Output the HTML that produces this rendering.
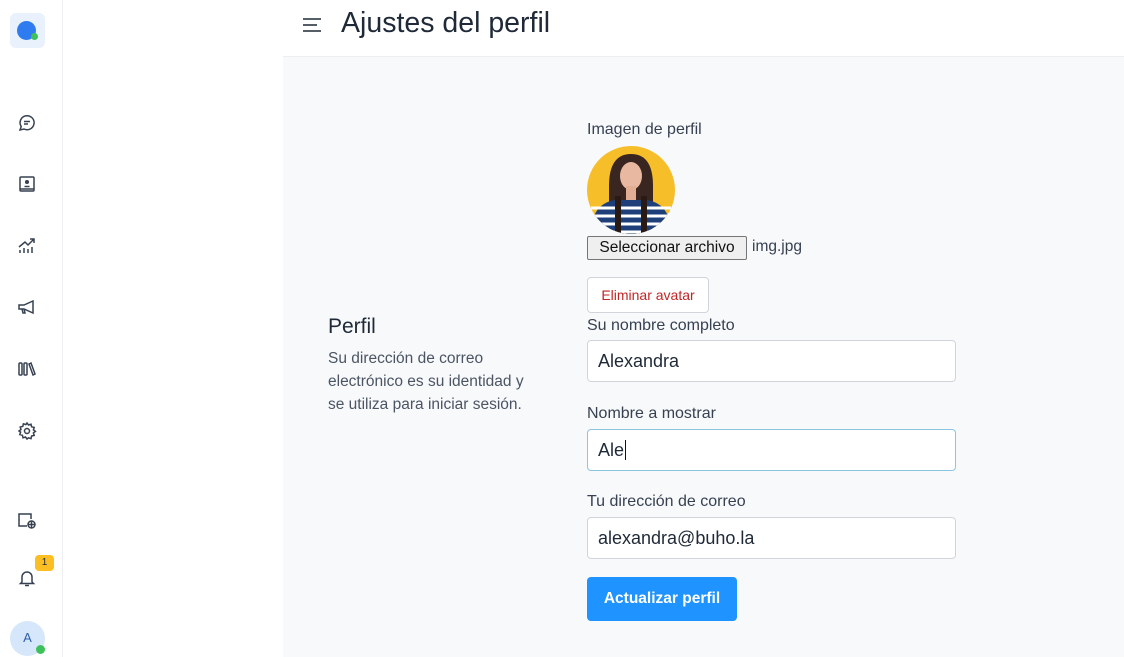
<!DOCTYPE html>
<html><head><meta charset="utf-8"><style>
*{box-sizing:border-box;margin:0;padding:0}
body{width:1124px;height:657px;overflow:hidden;font-family:"Liberation Sans",sans-serif;background:#fff;position:relative;color:#1f2937}
.side{position:absolute;left:0;top:0;width:63px;height:657px;border-right:1px solid #eef0f3;background:#fff}
.panel{position:absolute;left:63px;top:0;width:220px;height:657px;background:#fff}
.head{position:absolute;left:283px;top:0;right:0;height:57px;border-bottom:1px solid #eceef1;background:#fff}
.main{position:absolute;left:283px;top:57px;right:0;bottom:0;background:#f8f9fb}
.ic{position:absolute;left:17px;width:20px;height:20px}
.abs{position:absolute}
.lbl{position:absolute;left:587px;font-size:16px;color:#374151}
.inp{position:absolute;left:587px;width:369px;height:42px;border:1px solid #d1d5db;border-radius:4px;background:#fff;font-size:18px;padding:10px 10px;color:#1f2937}
</style></head><body>
<div class="side">
 <div class="abs" style="left:10px;top:13px;width:35px;height:35px;background:#e9f1fd;border-radius:6px"></div>
 <div class="abs" style="left:17px;top:21px;width:19px;height:19px;background:#2f7cf0;border-radius:50%"></div>
 <div class="abs" style="left:31px;top:33px;width:7px;height:7px;background:#3ec15a;border-radius:50%"></div>
 <svg class="ic" style="top:113px" viewBox="0 0 20 20" fill="none" stroke="#374151" stroke-width="1.5"><path d="M3 17l1.2-3.5A7 7 0 1 1 7 16z"/><path d="M7 8.5h6M7 11h4"/></svg>
 <svg class="ic" style="top:174px" viewBox="0 0 20 20" fill="none" stroke="#374151" stroke-width="1.5"><rect x="3" y="3" width="14" height="14" rx="1"/><path d="M3 15h14"/><circle cx="10" cy="8" r="1.3" fill="#374151"/><path d="M7.5 12.5h5"/></svg>
 <svg class="ic" style="top:236px" viewBox="0 0 20 20" fill="none" stroke="#374151" stroke-width="1.5"><path d="M2 11l6-5 3 3 6-6M13 3h4v4M3 17v-3M7 17v-5M11 17v-4M15 17v-6"/></svg>
 <svg class="ic" style="top:297px" viewBox="0 0 20 20" fill="none" stroke="#374151" stroke-width="1.5"><path d="M2 8h5l9-4v12l-9-4H2zM5 12l1 4h2l-1-4"/></svg>
 <svg class="ic" style="top:359px" viewBox="0 0 20 20" fill="none" stroke="#374151" stroke-width="1.5"><rect x="2" y="4" width="3" height="12" rx="1"/><rect x="7" y="4" width="3" height="12" rx="1"/><path d="M12 5l2-1 4 11-2 1z"/></svg>
 <svg class="ic" style="top:421px" viewBox="0 0 20 20" fill="none" stroke="#374151" stroke-width="1.5"><circle cx="10" cy="10" r="2.5"/><path d="M10 2l1.5 2 2.5-.8.6 2.6 2.6.6-.8 2.5 2 1.5-2 1.5.8 2.5-2.6.6-.6 2.6-2.5-.8L10 18l-1.5-2-2.5.8-.6-2.6-2.6-.6.8-2.5L2 10l2-1.5-.8-2.5 2.6-.6.6-2.6 2.5.8z"/></svg>
 <svg class="ic" style="top:510px" viewBox="0 0 20 20" fill="none" stroke="#374151" stroke-width="1.5"><path d="M10 16H2V4h12v5"/><circle cx="14.5" cy="14.5" r="3.5"/><path d="M11 14.5h7M14.5 11v7"/></svg>
 <svg class="ic" style="top:568px" viewBox="0 0 20 20" fill="none" stroke="#374151" stroke-width="1.5"><path d="M5 14V9a5 5 0 0 1 10 0v5l1.5 1.5h-13zM8 17.5h4"/></svg>
 <div class="abs" style="left:35px;top:555px;width:19px;height:16px;background:#fbbf24;border-radius:4px;font-size:10px;text-align:center;line-height:16px;color:#1f2937">1</div>
 <div class="abs" style="left:10px;top:621px;width:35px;height:35px;background:#d6e6fb;border-radius:50%;font-size:13px;text-align:center;line-height:33px;color:#2f5fa8">A</div>
 <div class="abs" style="left:36px;top:645px;width:9px;height:9px;background:#3ec15a;border-radius:50%"></div>
</div>
<div class="panel"></div>
<div class="head">
 <svg class="abs" style="left:20px;top:17px" width="19" height="16" viewBox="0 0 19 16" stroke="#1f2937" stroke-width="1.6"><path d="M0 2h18M0 8h14M0 14h18"/></svg>
 <div class="abs" style="left:58px;top:7px;font-size:28.5px;color:#1f2937">Ajustes del perfil</div>
</div>
<div class="main"></div>
<div class="abs" style="left:328px;top:315px;font-size:21px;color:#1f2937">Perfil</div>
<div class="abs" style="left:328px;top:347px;font-size:15.5px;line-height:23px;color:#4b5563;width:215px">Su dirección de correo electrónico es su identidad y se utiliza para iniciar sesión.</div>
<div class="lbl" style="top:121px">Imagen de perfil</div>
<svg class="abs" style="left:587px;top:146px" width="88" height="88" viewBox="0 0 88 88">
 <defs><clipPath id="c"><circle cx="44" cy="44" r="44"/></clipPath></defs>
 <g clip-path="url(#c)">
 <rect width="88" height="88" fill="#f6bf2a"/>
 <path d="M22 88V40q0-32 22-32t22 32v48z" fill="#3a2620"/>
 <ellipse cx="44" cy="30" rx="11" ry="14" fill="#e8b9a0"/>
 <rect x="39" y="40" width="10" height="14" fill="#e1ae94"/>
 <path d="M4 88q0-30 24-34h32q24 4 24 34z" fill="#1e3f7a"/>
 <g stroke="#fff" stroke-width="3"><path d="M4 62h80M4 70h80M4 78h80M4 86h80"/></g>
 <path d="M28 88V50h6v38zM54 88V50h6v38z" fill="#2a1a15"/>
 </g></svg>
<div class="abs" style="left:587px;top:236px;width:160px;height:24px;background:#efefef;border:1px solid #767676;border-radius:2px;font-size:15.5px;text-align:center;line-height:22px;color:#111;white-space:nowrap">Seleccionar archivo</div>
<div class="abs" style="left:752px;top:238px;font-size:15.5px;color:#374151">img.jpg</div>
<div class="abs" style="left:587px;top:277px;width:122px;height:36px;border:1px solid #d1d5db;border-radius:4px;background:#fff;font-size:14px;text-align:center;line-height:34px;color:#c02626">Eliminar avatar</div>
<div class="lbl" style="top:317px">Su nombre completo</div>
<div class="inp" style="top:340px">Alexandra</div>
<div class="lbl" style="top:405px">Nombre a mostrar</div>
<div class="inp" style="top:429px;border-color:#8ac6e0">Ale<span style="border-left:1px solid #111;margin-left:1px"></span></div>
<div class="lbl" style="top:493px">Tu dirección de correo</div>
<div class="inp" style="top:517px">alexandra@buho.la</div>
<div class="abs" style="left:587px;top:577px;width:150px;height:44px;background:#1f93ff;border-radius:4px;color:#fff;font-size:15.5px;font-weight:bold;text-align:center;line-height:44px">Actualizar perfil</div>
</body></html>
